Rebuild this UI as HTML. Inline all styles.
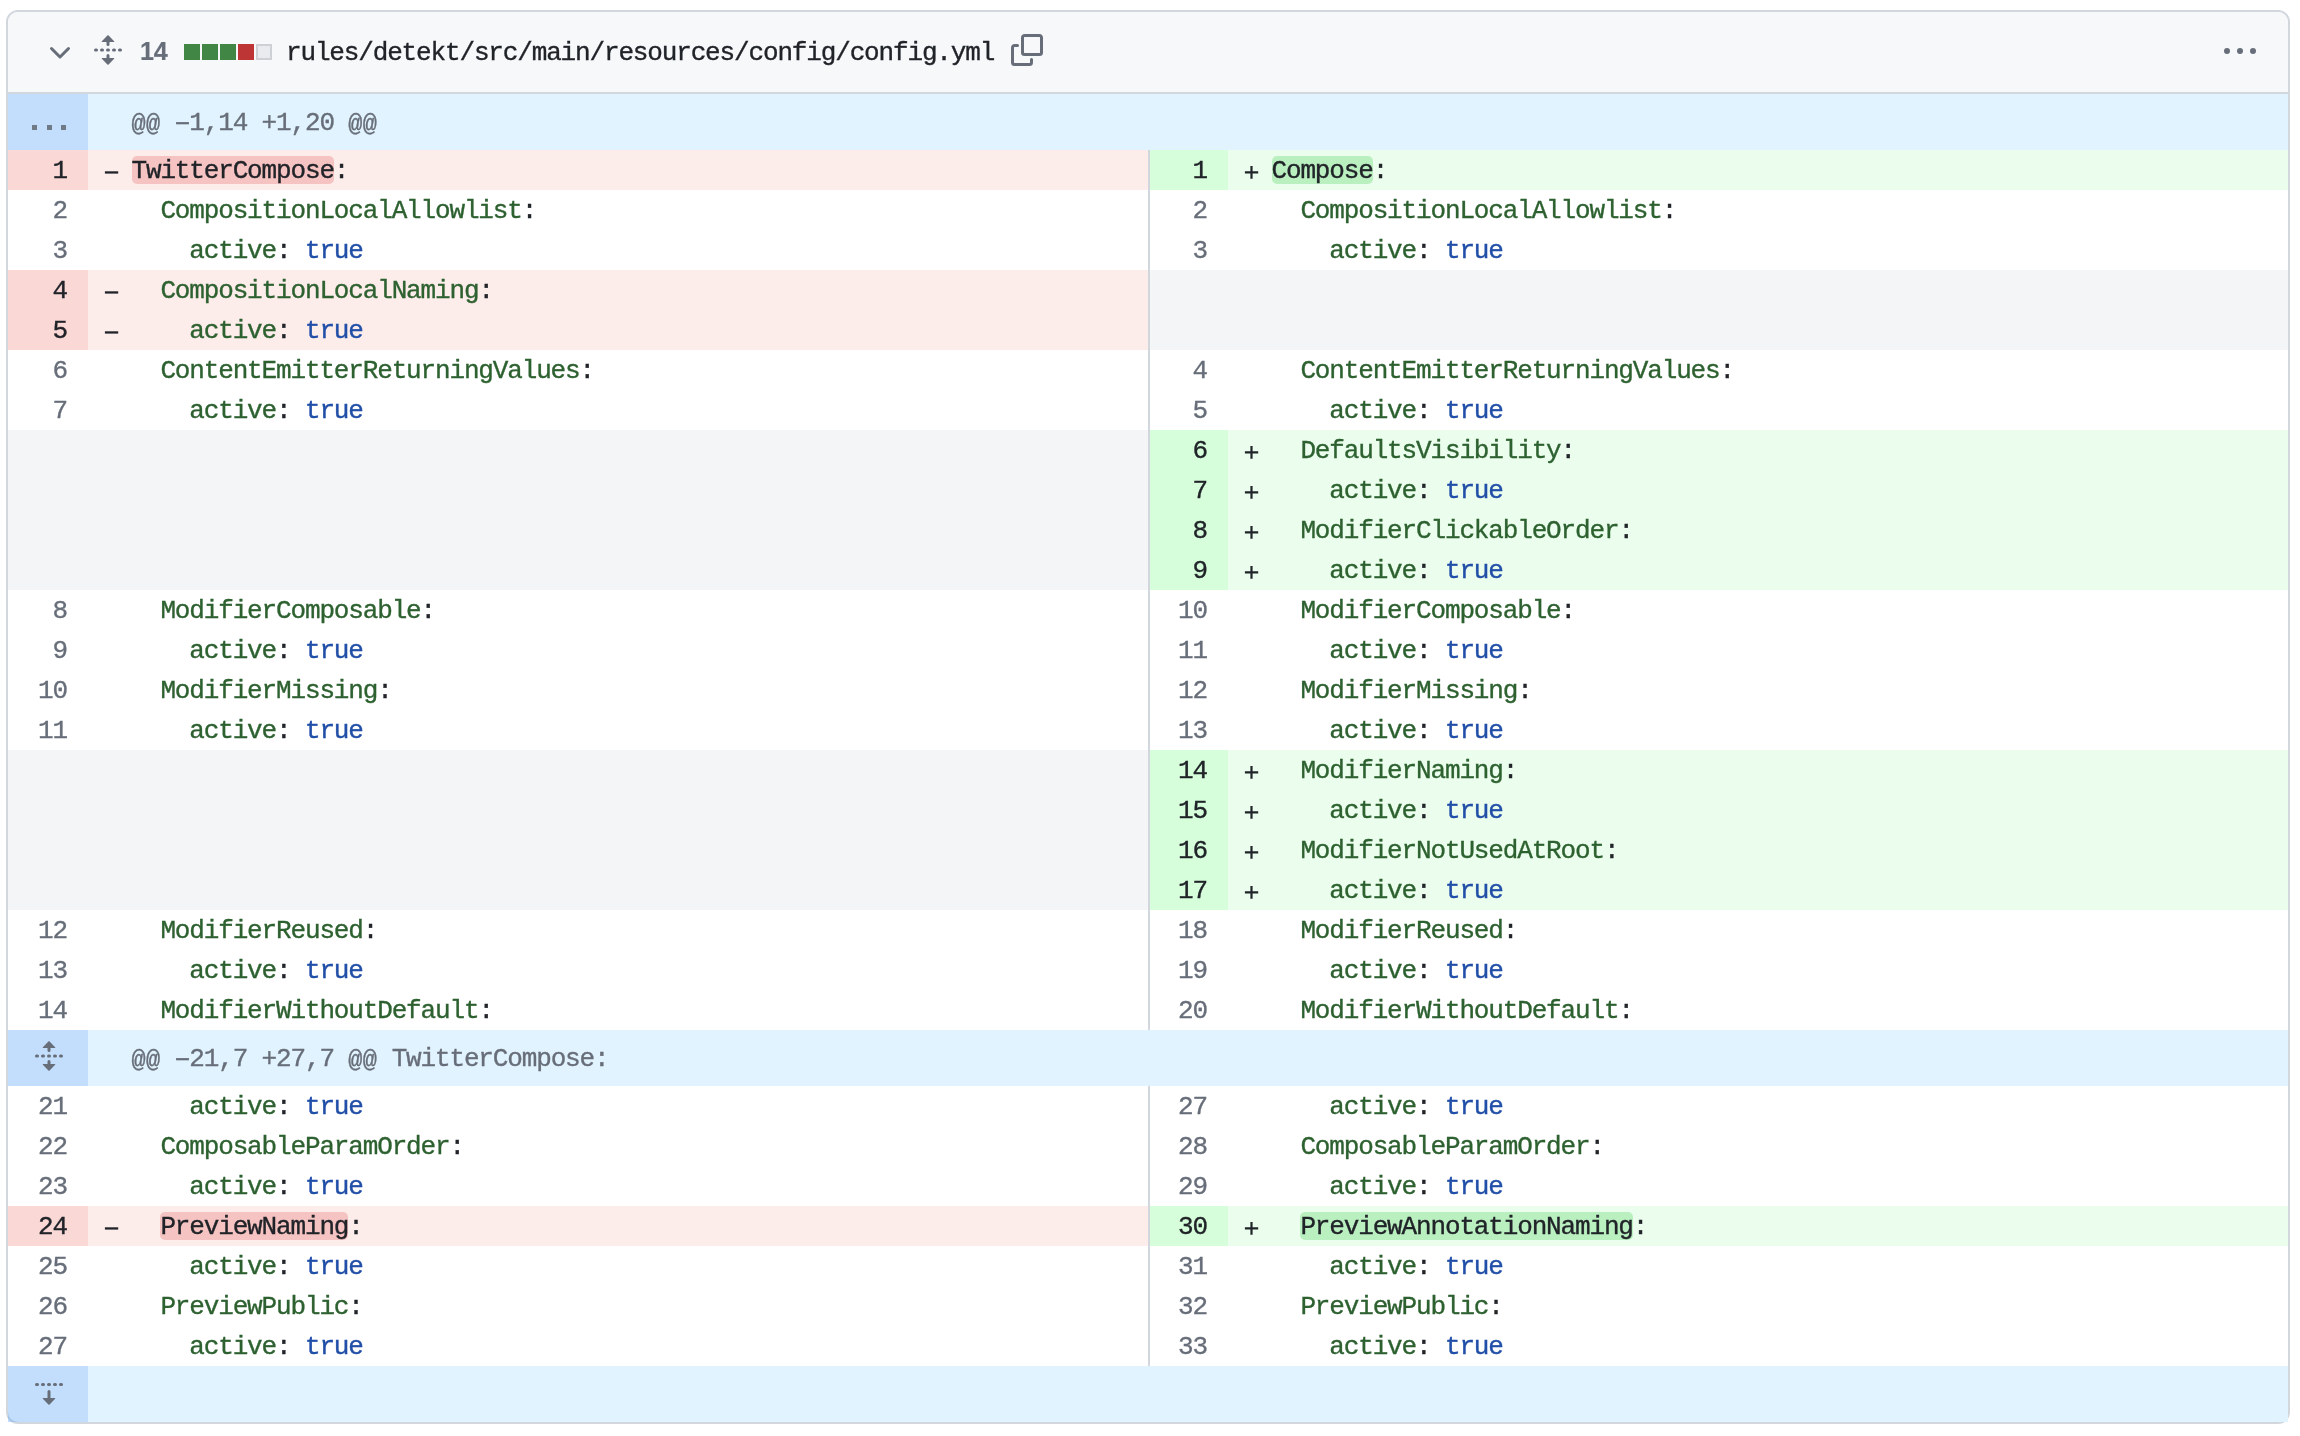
<!DOCTYPE html>
<html><head><meta charset="utf-8"><title>config.yml diff</title>
<style>
html,body{margin:0;padding:0;background:#fff}
body{-webkit-text-stroke:.35px;width:2300px;height:1436px;overflow:hidden;position:relative;font-family:"Liberation Mono",monospace}
.f{position:absolute;left:6px;top:10px;width:2280px;height:1410px;border:2px solid #d1d7dd;border-radius:12px;background:#fff;will-change:transform}
.h{position:relative;height:80px;background:#f6f8fa;border-bottom:2px solid #d1d7dd;border-radius:10px 10px 0 0}
.ic{position:absolute;display:block}
.cnt{position:absolute;left:132px;top:23px;letter-spacing:-.2px;-webkit-text-stroke:.15px;font:bold 25.2px/32px "Liberation Sans",sans-serif;color:#676e79}
.b{position:absolute;top:32px;width:16px;height:16px}
.fn{position:absolute;left:278px;top:21px;font-size:26.0px;letter-spacing:-1.15px;line-height:40px;color:#202328;white-space:pre}
.r{display:flex;height:40px;font-size:26.0px;letter-spacing:-1.15px;line-height:42.2px;color:#202328;white-space:pre}
.n{box-sizing:border-box;width:80px;height:100%;padding-right:21px;text-align:right;color:#676e79}
.n.R{border-left:2px solid #d1d7dd}
.k{position:relative;box-sizing:border-box;width:1060px;height:100%;padding-left:43.5px}
.n.d{background:#f9d8d6;color:#202328}.k.d{background:#fcecea}
.n.a{background:#d6fedb;color:#202328}.k.a{background:#ebfeed}
.m{background:#f3f5f7}
.e{color:#2d6130}.c{color:#214fa8}
.x{display:inline-block;height:28px;line-height:30.2px;vertical-align:top;margin-top:6px;border-radius:5px}
.d .x{background:#f5c3c1}.a .x{background:#baf0c0}
.mk{position:absolute;left:0;top:0;fill:#202328}
.r.g{height:56px;line-height:58.2px;background:#e1f3fe;color:#676e79;position:relative}
.g .n{background:#c2defc;padding:0;text-align:center;position:relative}
.hm{position:relative;top:2px}
.at{font-size:23.5px;letter-spacing:.35px;position:relative;top:.7px}
.dt{position:absolute;top:31px;width:5px;height:5px;background:#676e79;opacity:.9}
.g .k{width:2200px}
.r.z{background:none}.z .n{background:rgba(102,172,248,.4)}.z .k{background:#e1f3fe}
</style></head><body>
<div class="f">
<div class="h">
<svg class="ic" style="left:36px;top:25px" width="32" height="32" viewBox="0 0 16 16" fill="#676e79"><path d="M12.78 5.22a.749.749 0 0 1 0 1.06l-4.25 4.25a.749.749 0 0 1-1.06 0L3.22 6.28a.749.749 0 1 1 1.06-1.06L8 8.939l3.72-3.719a.749.749 0 0 1 1.06 0Z"/></svg>
<svg class="ic" style="left:84px;top:22px" width="32" height="32" viewBox="0 0 16 16" fill="#676e79"><path d="m8.177.677 2.896 2.896a.25.25 0 0 1-.177.427H8.75v1.25a.75.75 0 0 1-1.5 0V4H5.104a.25.25 0 0 1-.177-.427L7.823.677a.25.25 0 0 1 .354 0ZM7.25 10.75a.75.75 0 0 1 1.5 0V12h2.146a.25.25 0 0 1 .177.427l-2.896 2.896a.25.25 0 0 1-.354 0l-2.896-2.896A.25.25 0 0 1 5.104 12H7.25v-1.25Zm-5-2a.75.75 0 0 0 0-1.5h-.5a.75.75 0 0 0 0 1.5h.5ZM6 8a.75.75 0 0 1-.75.75h-.5a.75.75 0 0 1 0-1.5h.5A.75.75 0 0 1 6 8Zm2.25.75a.75.75 0 0 0 0-1.5h-.5a.75.75 0 0 0 0 1.5h.5ZM12 8a.75.75 0 0 1-.75.75h-.5a.75.75 0 0 1 0-1.5h.5A.75.75 0 0 1 12 8Zm2.25.75a.75.75 0 0 0 0-1.5h-.5a.75.75 0 0 0 0 1.5h.5Z"/></svg>
<span class="cnt">14</span>
<span class="b" style="left:176px;background:#428646"></span><span class="b" style="left:194px;background:#428646"></span><span class="b" style="left:212px;background:#428646"></span><span class="b" style="left:230px;background:#be3536"></span><span class="b" style="left:248px;background:#e9ebef;box-shadow:inset 0 0 0 2px rgba(27,31,36,.13)"></span>
<span class="fn">rules/detekt/src/main/resources/config/config.yml</span>
<svg class="ic" style="left:1003px;top:22px" width="32" height="32" viewBox="0 0 16 16" fill="#676e79"><path d="M0 6.75C0 5.784.784 5 1.75 5h1.5a.75.75 0 0 1 0 1.5h-1.5a.25.25 0 0 0-.25.25v7.5c0 .138.112.25.25.25h7.5a.25.25 0 0 0 .25-.25v-1.5a.75.75 0 0 1 1.5 0v1.5A1.75 1.75 0 0 1 9.25 16h-7.5A1.75 1.75 0 0 1 0 14.25Z M5 1.75C5 .784 5.784 0 6.75 0h7.5C15.216 0 16 .784 16 1.75v7.5A1.75 1.75 0 0 1 14.25 11h-7.5A1.75 1.75 0 0 1 5 9.25Zm1.75-.25a.25.25 0 0 0-.25.25v7.5c0 .138.112.25.25.25h7.5a.25.25 0 0 0 .25-.25v-7.5a.25.25 0 0 0-.25-.25Z"/></svg>
<svg class="ic" style="left:2216px;top:24px" width="32" height="32" viewBox="0 0 16 16" fill="#676e79"><path d="M8 9a1.5 1.5 0 1 0 0-3 1.5 1.5 0 0 0 0 3ZM1.5 9a1.5 1.5 0 1 0 0-3 1.5 1.5 0 0 0 0 3Zm13 0a1.5 1.5 0 1 0 0-3 1.5 1.5 0 0 0 0 3Z"/></svg>
</div>
<div class="r g"><div class="n"><i class="dt" style="left:24px"></i><i class="dt" style="left:38.5px"></i><i class="dt" style="left:53px"></i></div><div class="k"><span class="t"><span class="at">@@</span> <span class="hm">−</span>1,14 +1,20 <span class="at">@@</span></span></div></div>
<div class="r"><div class="n L d">1</div><div class="k L d"><svg class="mk" width="40" height="40" viewBox="0 0 40 40"><path d="M16.9 21.3h13.3v2.3H16.9z"/></svg><span class="t"><span class="x">TwitterCompose</span>:</span></div><div class="n R a">1</div><div class="k R a"><svg class="mk" width="40" height="40" viewBox="0 0 40 40"><path d="M16.9 21.2h13.3v2.2H16.9zM22.4 15.9h2.2v12.8h-2.2z"/></svg><span class="t"><span class="x">Compose</span>:</span></div></div>
<div class="r"><div class="n L ">2</div><div class="k L "><span class="t">  <span class="e">CompositionLocalAllowlist</span>:</span></div><div class="n R ">2</div><div class="k R "><span class="t">  <span class="e">CompositionLocalAllowlist</span>:</span></div></div>
<div class="r"><div class="n L ">3</div><div class="k L "><span class="t">    <span class="e">active</span>: <span class="c">true</span></span></div><div class="n R ">3</div><div class="k R "><span class="t">    <span class="e">active</span>: <span class="c">true</span></span></div></div>
<div class="r"><div class="n L d">4</div><div class="k L d"><svg class="mk" width="40" height="40" viewBox="0 0 40 40"><path d="M16.9 21.3h13.3v2.3H16.9z"/></svg><span class="t">  <span class="e">CompositionLocalNaming</span>:</span></div><div class="n R m"></div><div class="k R m"></div></div>
<div class="r"><div class="n L d">5</div><div class="k L d"><svg class="mk" width="40" height="40" viewBox="0 0 40 40"><path d="M16.9 21.3h13.3v2.3H16.9z"/></svg><span class="t">    <span class="e">active</span>: <span class="c">true</span></span></div><div class="n R m"></div><div class="k R m"></div></div>
<div class="r"><div class="n L ">6</div><div class="k L "><span class="t">  <span class="e">ContentEmitterReturningValues</span>:</span></div><div class="n R ">4</div><div class="k R "><span class="t">  <span class="e">ContentEmitterReturningValues</span>:</span></div></div>
<div class="r"><div class="n L ">7</div><div class="k L "><span class="t">    <span class="e">active</span>: <span class="c">true</span></span></div><div class="n R ">5</div><div class="k R "><span class="t">    <span class="e">active</span>: <span class="c">true</span></span></div></div>
<div class="r"><div class="n L m"></div><div class="k L m"></div><div class="n R a">6</div><div class="k R a"><svg class="mk" width="40" height="40" viewBox="0 0 40 40"><path d="M16.9 21.2h13.3v2.2H16.9zM22.4 15.9h2.2v12.8h-2.2z"/></svg><span class="t">  <span class="e">DefaultsVisibility</span>:</span></div></div>
<div class="r"><div class="n L m"></div><div class="k L m"></div><div class="n R a">7</div><div class="k R a"><svg class="mk" width="40" height="40" viewBox="0 0 40 40"><path d="M16.9 21.2h13.3v2.2H16.9zM22.4 15.9h2.2v12.8h-2.2z"/></svg><span class="t">    <span class="e">active</span>: <span class="c">true</span></span></div></div>
<div class="r"><div class="n L m"></div><div class="k L m"></div><div class="n R a">8</div><div class="k R a"><svg class="mk" width="40" height="40" viewBox="0 0 40 40"><path d="M16.9 21.2h13.3v2.2H16.9zM22.4 15.9h2.2v12.8h-2.2z"/></svg><span class="t">  <span class="e">ModifierClickableOrder</span>:</span></div></div>
<div class="r"><div class="n L m"></div><div class="k L m"></div><div class="n R a">9</div><div class="k R a"><svg class="mk" width="40" height="40" viewBox="0 0 40 40"><path d="M16.9 21.2h13.3v2.2H16.9zM22.4 15.9h2.2v12.8h-2.2z"/></svg><span class="t">    <span class="e">active</span>: <span class="c">true</span></span></div></div>
<div class="r"><div class="n L ">8</div><div class="k L "><span class="t">  <span class="e">ModifierComposable</span>:</span></div><div class="n R ">10</div><div class="k R "><span class="t">  <span class="e">ModifierComposable</span>:</span></div></div>
<div class="r"><div class="n L ">9</div><div class="k L "><span class="t">    <span class="e">active</span>: <span class="c">true</span></span></div><div class="n R ">11</div><div class="k R "><span class="t">    <span class="e">active</span>: <span class="c">true</span></span></div></div>
<div class="r"><div class="n L ">10</div><div class="k L "><span class="t">  <span class="e">ModifierMissing</span>:</span></div><div class="n R ">12</div><div class="k R "><span class="t">  <span class="e">ModifierMissing</span>:</span></div></div>
<div class="r"><div class="n L ">11</div><div class="k L "><span class="t">    <span class="e">active</span>: <span class="c">true</span></span></div><div class="n R ">13</div><div class="k R "><span class="t">    <span class="e">active</span>: <span class="c">true</span></span></div></div>
<div class="r"><div class="n L m"></div><div class="k L m"></div><div class="n R a">14</div><div class="k R a"><svg class="mk" width="40" height="40" viewBox="0 0 40 40"><path d="M16.9 21.2h13.3v2.2H16.9zM22.4 15.9h2.2v12.8h-2.2z"/></svg><span class="t">  <span class="e">ModifierNaming</span>:</span></div></div>
<div class="r"><div class="n L m"></div><div class="k L m"></div><div class="n R a">15</div><div class="k R a"><svg class="mk" width="40" height="40" viewBox="0 0 40 40"><path d="M16.9 21.2h13.3v2.2H16.9zM22.4 15.9h2.2v12.8h-2.2z"/></svg><span class="t">    <span class="e">active</span>: <span class="c">true</span></span></div></div>
<div class="r"><div class="n L m"></div><div class="k L m"></div><div class="n R a">16</div><div class="k R a"><svg class="mk" width="40" height="40" viewBox="0 0 40 40"><path d="M16.9 21.2h13.3v2.2H16.9zM22.4 15.9h2.2v12.8h-2.2z"/></svg><span class="t">  <span class="e">ModifierNotUsedAtRoot</span>:</span></div></div>
<div class="r"><div class="n L m"></div><div class="k L m"></div><div class="n R a">17</div><div class="k R a"><svg class="mk" width="40" height="40" viewBox="0 0 40 40"><path d="M16.9 21.2h13.3v2.2H16.9zM22.4 15.9h2.2v12.8h-2.2z"/></svg><span class="t">    <span class="e">active</span>: <span class="c">true</span></span></div></div>
<div class="r"><div class="n L ">12</div><div class="k L "><span class="t">  <span class="e">ModifierReused</span>:</span></div><div class="n R ">18</div><div class="k R "><span class="t">  <span class="e">ModifierReused</span>:</span></div></div>
<div class="r"><div class="n L ">13</div><div class="k L "><span class="t">    <span class="e">active</span>: <span class="c">true</span></span></div><div class="n R ">19</div><div class="k R "><span class="t">    <span class="e">active</span>: <span class="c">true</span></span></div></div>
<div class="r"><div class="n L ">14</div><div class="k L "><span class="t">  <span class="e">ModifierWithoutDefault</span>:</span></div><div class="n R ">20</div><div class="k R "><span class="t">  <span class="e">ModifierWithoutDefault</span>:</span></div></div>
<div class="r g"><div class="n"><svg class="ic" style="left:25px;top:10px" width="32" height="32" viewBox="0 0 16 16" fill="#676e79"><path d="m8.177.677 2.896 2.896a.25.25 0 0 1-.177.427H8.75v1.25a.75.75 0 0 1-1.5 0V4H5.104a.25.25 0 0 1-.177-.427L7.823.677a.25.25 0 0 1 .354 0ZM7.25 10.75a.75.75 0 0 1 1.5 0V12h2.146a.25.25 0 0 1 .177.427l-2.896 2.896a.25.25 0 0 1-.354 0l-2.896-2.896A.25.25 0 0 1 5.104 12H7.25v-1.25Zm-5-2a.75.75 0 0 0 0-1.5h-.5a.75.75 0 0 0 0 1.5h.5ZM6 8a.75.75 0 0 1-.75.75h-.5a.75.75 0 0 1 0-1.5h.5A.75.75 0 0 1 6 8Zm2.25.75a.75.75 0 0 0 0-1.5h-.5a.75.75 0 0 0 0 1.5h.5ZM12 8a.75.75 0 0 1-.75.75h-.5a.75.75 0 0 1 0-1.5h.5A.75.75 0 0 1 12 8Zm2.25.75a.75.75 0 0 0 0-1.5h-.5a.75.75 0 0 0 0 1.5h.5Z"/></svg></div><div class="k"><span class="t"><span class="at">@@</span> <span class="hm">−</span>21,7 +27,7 <span class="at">@@</span> TwitterCompose:</span></div></div>
<div class="r"><div class="n L ">21</div><div class="k L "><span class="t">    <span class="e">active</span>: <span class="c">true</span></span></div><div class="n R ">27</div><div class="k R "><span class="t">    <span class="e">active</span>: <span class="c">true</span></span></div></div>
<div class="r"><div class="n L ">22</div><div class="k L "><span class="t">  <span class="e">ComposableParamOrder</span>:</span></div><div class="n R ">28</div><div class="k R "><span class="t">  <span class="e">ComposableParamOrder</span>:</span></div></div>
<div class="r"><div class="n L ">23</div><div class="k L "><span class="t">    <span class="e">active</span>: <span class="c">true</span></span></div><div class="n R ">29</div><div class="k R "><span class="t">    <span class="e">active</span>: <span class="c">true</span></span></div></div>
<div class="r"><div class="n L d">24</div><div class="k L d"><svg class="mk" width="40" height="40" viewBox="0 0 40 40"><path d="M16.9 21.3h13.3v2.3H16.9z"/></svg><span class="t">  <span class="x">PreviewNaming</span>:</span></div><div class="n R a">30</div><div class="k R a"><svg class="mk" width="40" height="40" viewBox="0 0 40 40"><path d="M16.9 21.2h13.3v2.2H16.9zM22.4 15.9h2.2v12.8h-2.2z"/></svg><span class="t">  <span class="x">PreviewAnnotationNaming</span>:</span></div></div>
<div class="r"><div class="n L ">25</div><div class="k L "><span class="t">    <span class="e">active</span>: <span class="c">true</span></span></div><div class="n R ">31</div><div class="k R "><span class="t">    <span class="e">active</span>: <span class="c">true</span></span></div></div>
<div class="r"><div class="n L ">26</div><div class="k L "><span class="t">  <span class="e">PreviewPublic</span>:</span></div><div class="n R ">32</div><div class="k R "><span class="t">  <span class="e">PreviewPublic</span>:</span></div></div>
<div class="r"><div class="n L ">27</div><div class="k L "><span class="t">    <span class="e">active</span>: <span class="c">true</span></span></div><div class="n R ">33</div><div class="k R "><span class="t">    <span class="e">active</span>: <span class="c">true</span></span></div></div>
<div class="r g z"><div class="n"><svg class="ic" style="left:25px;top:10px" width="32" height="32" viewBox="0 0 16 16" fill="#676e79"><path d="m8.177 14.323 2.896-2.896a.25.25 0 0 0-.177-.427H8.75V7.764a.75.75 0 1 0-1.5 0V11H5.104a.25.25 0 0 0-.177.427l2.896 2.896a.25.25 0 0 0 .354 0ZM2.25 5a.75.75 0 0 0 0-1.5h-.5a.75.75 0 0 0 0 1.5h.5ZM6 4.25a.75.75 0 0 1-.75.75h-.5a.75.75 0 0 1 0-1.5h.5a.75.75 0 0 1 .75.75ZM8.25 5a.75.75 0 0 0 0-1.5h-.5a.75.75 0 0 0 0 1.5h.5ZM12 4.25a.75.75 0 0 1-.75.75h-.5a.75.75 0 0 1 0-1.5h.5a.75.75 0 0 1 .75.75Zm2.25.75a.75.75 0 0 0 0-1.5h-.5a.75.75 0 0 0 0 1.5h.5Z"/></svg></div><div class="k"></div></div>
</div>
</body></html>
